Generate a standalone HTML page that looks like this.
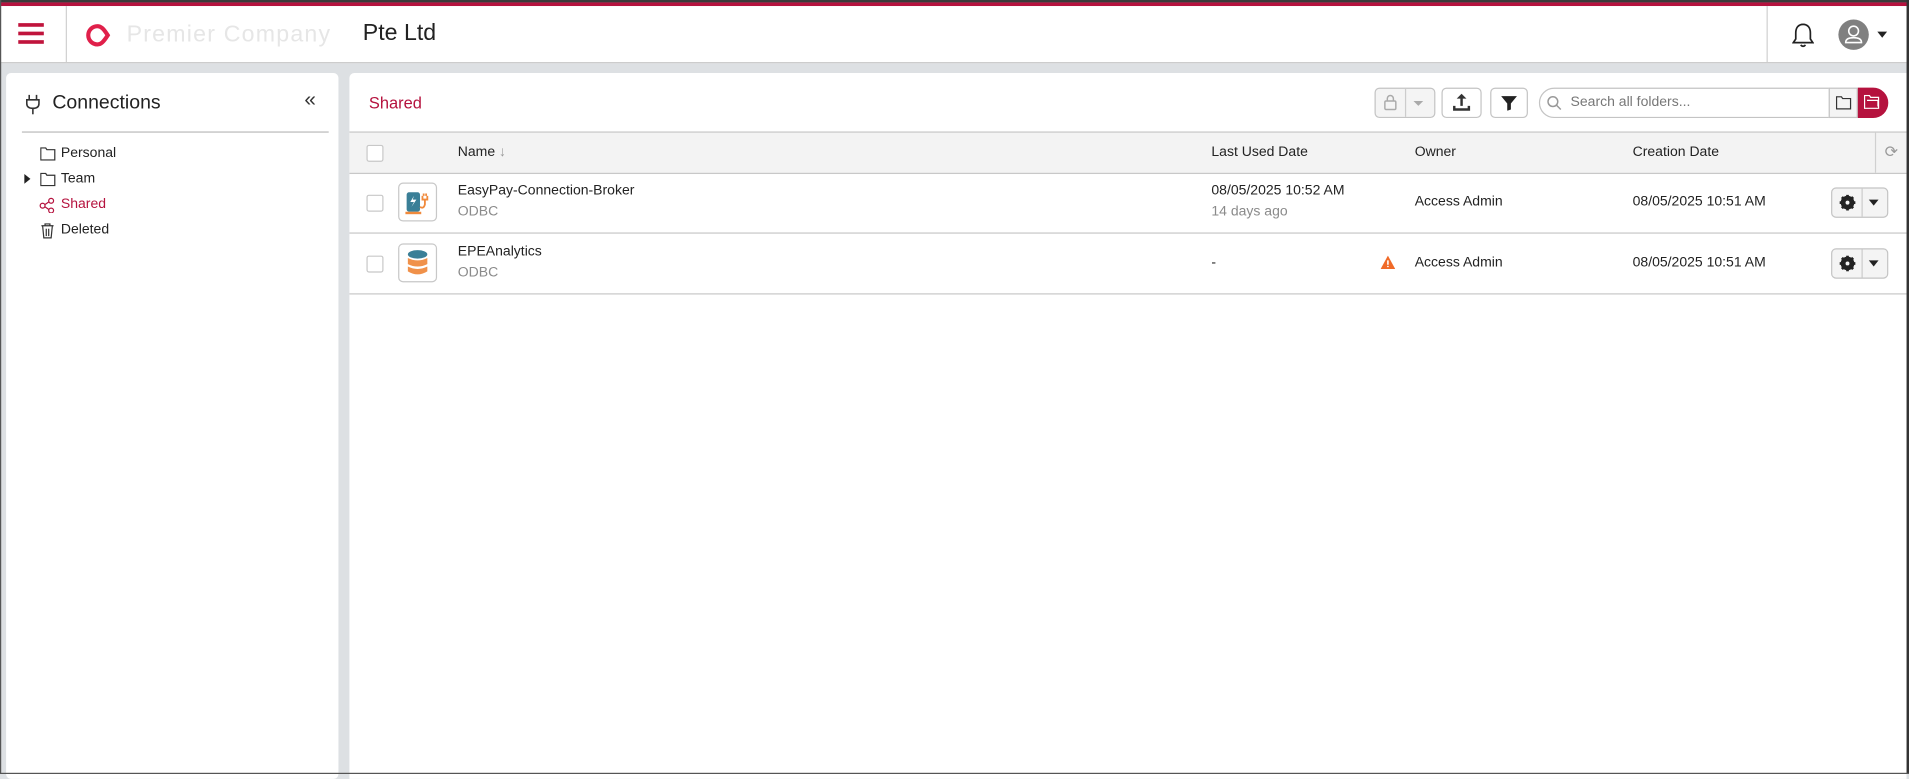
<!DOCTYPE html>
<html><head><meta charset="utf-8"><style>
html,body{margin:0;padding:0;width:1909px;height:774px;overflow:hidden;background:#dfe2e5;font-family:"Liberation Sans",sans-serif;}
#w{position:absolute;left:0;top:0;width:1568px;height:636px;transform:scale(1.21747,1.21698);transform-origin:0 0;background:#dde0e3;}
.a{position:absolute;}
.t{position:absolute;font-size:11.5px;color:#222;white-space:nowrap;}
.g{color:#8a8a8a;}
.cb{position:absolute;width:12px;height:12px;border:1px solid #c8c8c8;border-radius:2px;background:#fff;}
.btn{position:absolute;border:1px solid #c4c4c4;border-radius:4px;background:#fff;box-sizing:border-box;}
</style></head><body><div id="w">
<!-- header -->
<div class="a" style="left:0;top:0;width:1568px;height:2px;background:#3a3a3a"></div>
<div class="a" style="left:0;top:2px;width:1568px;height:3px;background:#b5123e"></div>
<div class="a" style="left:0;top:5px;width:1566px;height:46px;background:#fff;border-bottom:1px solid #c9c9c9"></div>
<div class="a" style="left:15px;top:19px;width:21px;height:3px;background:#c0143c"></div>
<div class="a" style="left:15px;top:26px;width:21px;height:3px;background:#c0143c"></div>
<div class="a" style="left:15px;top:33px;width:21px;height:3px;background:#c0143c"></div>
<div class="a" style="left:54px;top:5px;width:1px;height:46px;background:#d0d0d0"></div>
<svg class="a" style="left:70px;top:19px" width="24" height="20" viewBox="0 0 24 20"><path d="M10 2.5a7.5 7.5 0 1 0 0 15c3 0 5-2 8.5-7.5C15 4.5 13 2.5 10 2.5z" fill="none" stroke="#e0204a" stroke-width="3.4"/></svg>
<div class="t" style="left:104px;top:18px;font-size:19px;color:#e6e6e6;letter-spacing:1px">Premier Company</div>
<div class="t" style="left:298px;top:17px;font-size:19px;color:#222">Pte Ltd</div>
<div class="a" style="left:1451px;top:5px;width:1px;height:46px;background:#d0d0d0"></div>
<svg class="a" style="left:1472px;top:18px" width="18" height="22" viewBox="0 0 18 22"><path d="M9 2c-4 0-6 3-6 7v5l-2 3h16l-2-3V9c0-4-2-7-6-7zM7 19q2 2 4 0" fill="none" stroke="#222" stroke-width="1.4"/></svg>
<div class="a" style="left:1510px;top:16px;width:25px;height:25px;border-radius:50%;background:#808080"></div>
<svg class="a" style="left:1510px;top:16px" width="25" height="25" viewBox="0 0 25 25"><circle cx="12.5" cy="9.5" r="4" fill="none" stroke="#fff" stroke-width="1.3"/><path d="M6 19q0-4 6.5-4t6.5 4z" fill="none" stroke="#fff" stroke-width="1.3"/></svg>
<div class="a" style="left:1542px;top:26px;border:4px solid transparent;border-top:5px solid #222"></div>
<!-- left panel -->
<div class="a" style="left:5px;top:60px;width:273px;height:580px;background:#fff;border-radius:4px"></div>
<svg class="a" style="left:20px;top:77px" width="14" height="17" viewBox="0 0 14 17"><path d="M4 1v4M10 1v4M2 5h10v3q0 4-5 4t-5-4zM7 12v5" fill="none" stroke="#333" stroke-width="1.3"/></svg>
<div class="t" style="left:43px;top:76px;font-size:16px;color:#222">Connections</div>
<div class="t" style="left:250px;top:72px;font-size:17px;color:#333">«</div>
<div class="a" style="left:18px;top:108px;width:252px;height:1px;background:#bbb"></div>
<svg class="a" style="left:33px;top:121px" width="13" height="11"><path d="M.5 .5h4l1 1.5h6.5v8.5h-11.5z" fill="none" stroke="#333"/></svg>
<div class="t" style="left:50px;top:120px">Personal</div>
<div class="a" style="left:20px;top:143px;border:4px solid transparent;border-left:5px solid #222"></div>
<svg class="a" style="left:33px;top:142px" width="13" height="11"><path d="M.5 .5h4l1 1.5h6.5v8.5h-11.5z" fill="none" stroke="#333"/></svg>
<div class="t" style="left:50px;top:141px">Team</div>
<svg class="a" style="left:32px;top:162px" width="13" height="13" viewBox="0 0 13 13" fill="none" stroke="#b5123e"><circle cx="3" cy="7" r="2"/><circle cx="10" cy="3" r="2"/><circle cx="10" cy="11" r="2"/><path d="M5 6l3-2M5 8l3 2"/></svg>
<div class="t" style="left:50px;top:162px;color:#b5123e">Shared</div>
<svg class="a" style="left:33px;top:183px" width="12" height="13" viewBox="0 0 12 13" fill="none" stroke="#333"><path d="M1 2.5h10M4 2.5v-1.5h4v1.5M2 2.5l1 10h6l1-10M5 5v6M7 5v6"/></svg>
<div class="t" style="left:50px;top:183px">Deleted</div>
<!-- main panel -->
<div class="a" style="left:287px;top:60px;width:1279px;height:580px;background:#fff;border-radius:4px 0 0 0"></div>
<div class="t" style="left:303px;top:77px;font-size:13.5px;color:#b5123e">Shared</div>
<div class="btn" style="left:1129px;top:72px;width:50px;height:25px;background:#f4f4f4"></div>
<div class="a" style="left:1154px;top:73px;width:1px;height:23px;background:#ccc"></div>
<svg class="a" style="left:1136px;top:77px" width="12" height="14" viewBox="0 0 12 14" fill="none" stroke="#aaa" stroke-width="1.2"><rect x="1.5" y="6" width="9" height="7" rx="1"/><path d="M3.5 6V4a2.5 2.5 0 0 1 5 0v2"/></svg>
<div class="a" style="left:1161px;top:83px;border:4px solid transparent;border-top:4px solid #aaa"></div>
<div class="btn" style="left:1184px;top:72px;width:33px;height:25px"></div>
<svg class="a" style="left:1193px;top:76px" width="15" height="16" viewBox="0 0 15 16"><path d="M7.5 1l-4 4h3v6h2V5h3z" fill="#333"/><path d="M1.5 11v3h12v-3" fill="none" stroke="#333" stroke-width="2"/></svg>
<div class="btn" style="left:1224px;top:72px;width:31px;height:25px"></div>
<svg class="a" style="left:1233px;top:78px" width="13" height="13" viewBox="0 0 13 13"><path d="M0 1h13l-5 6v5l-3 1V7z" fill="#222"/></svg>
<div class="a" style="left:1264px;top:72px;width:262px;height:25px;border:1px solid #c4c4c4;border-radius:13px 0 0 13px;box-sizing:border-box"></div>
<svg class="a" style="left:1270px;top:78px" width="13" height="13" viewBox="0 0 13 13" fill="none" stroke="#999" stroke-width="1.2"><circle cx="5.5" cy="5.5" r="4"/><path d="M8.5 8.5l3.5 3.5"/></svg>
<div class="t" style="left:1290px;top:78px;color:#777">Search all folders...</div>
<div class="a" style="left:1502px;top:72px;width:24px;height:25px;background:#f4f4f4;border:1px solid #c4c4c4;box-sizing:border-box"></div>
<svg class="a" style="left:1508px;top:79px" width="13" height="11"><path d="M.5 .5h4l1 1.5h6.5v8.5h-11.5z" fill="none" stroke="#333"/></svg>
<div class="a" style="left:1526px;top:72px;width:25px;height:25px;background:#b5123e;border-radius:0 13px 13px 0"></div>
<svg class="a" style="left:1531px;top:78px" width="14" height="12" viewBox="0 0 14 12" fill="none" stroke="#fff"><path d="M.5 .5h4l1 1.5h6.5v9h-11.5z"/><path d="M2.5 4.5h9v5"/></svg>
<!-- table header -->
<div class="a" style="left:287px;top:108px;width:1279px;height:33px;background:#f3f3f3;border-top:1px solid #c8c8c8;border-bottom:1px solid #c8c8c8"></div>
<div class="cb" style="left:301px;top:119px"></div>
<div class="t" style="left:376px;top:119px">Name <span style="color:#999">↓</span></div>
<div class="t" style="left:995px;top:119px">Last Used Date</div>
<div class="t" style="left:1162px;top:119px">Owner</div>
<div class="t" style="left:1341px;top:119px">Creation Date</div>
<div class="a" style="left:1540px;top:109px;width:1px;height:33px;background:#d0d0d0"></div>
<div class="t" style="left:1548px;top:117px;color:#999;font-size:13px">⟳</div>
<!-- row 1 -->
<div class="a" style="left:287px;top:191px;width:1279px;height:1px;background:#c8c8c8"></div>
<div class="cb" style="left:301px;top:160px"></div>
<div class="a" style="left:327px;top:150px;width:32px;height:32px;border:1px solid #c8c8c8;border-radius:4px;box-sizing:border-box"></div>
<svg class="a" style="left:329px;top:152px" width="28" height="28" viewBox="0 0 28 28"><rect x="5" y="6" width="11" height="16" rx="2" fill="#3a7f97"/><path d="M11 9l-3 5h3l-2 4 4-6h-3z" fill="#fff"/><rect x="4" y="22" width="13" height="2" fill="#f08a3c"/><path d="M16 18q3 2 4-2v-4M18 9v3h4V9M19 9V7M21 9V7" fill="none" stroke="#f08a3c" stroke-width="1.5"/></svg>
<div class="t" style="left:376px;top:151px">EasyPay-Connection-Broker</div>
<div class="t g" style="left:376px;top:168px">ODBC</div>
<div class="t" style="left:995px;top:151px">08/05/2025 10:52 AM</div>
<div class="t g" style="left:995px;top:168px">14 days ago</div>
<div class="t" style="left:1162px;top:160px">Access Admin</div>
<div class="t" style="left:1341px;top:160px">08/05/2025 10:51 AM</div>
<!-- row 2 -->
<div class="a" style="left:287px;top:241px;width:1279px;height:1px;background:#c8c8c8"></div>
<div class="cb" style="left:301px;top:210px"></div>
<div class="a" style="left:327px;top:200px;width:32px;height:32px;border:1px solid #c8c8c8;border-radius:4px;box-sizing:border-box"></div>
<svg class="a" style="left:329px;top:202px" width="28" height="28" viewBox="0 0 28 28"><ellipse cx="14" cy="7" rx="8" ry="3.5" fill="#3a7f97"/><path d="M6 10q8 4 16 0v5q-8 4-16 0zM6 17q8 4 16 0v4q-8 5-16 0z" fill="#f0914a"/></svg>
<div class="t" style="left:376px;top:201px">EPEAnalytics</div>
<div class="t g" style="left:376px;top:218px">ODBC</div>
<div class="t" style="left:995px;top:210px">-</div>
<svg class="a" style="left:1134px;top:210px" width="12" height="11" viewBox="0 0 12 11"><path d="M6 0l6 11H0z" fill="#f06a28"/><path d="M6 4v3.5M6 8.5v1" stroke="#fff" stroke-width="1.3"/></svg>
<div class="t" style="left:1162px;top:210px">Access Admin</div>
<div class="t" style="left:1341px;top:210px">08/05/2025 10:51 AM</div>
<!-- action buttons -->
<div class="btn" style="left:1504px;top:154px;width:47px;height:25px;background:#f4f4f4"></div>
<div class="a" style="left:1529px;top:155px;width:1px;height:23px;background:#ccc"></div>
<svg class="a" style="left:1511px;top:160px" width="13" height="13" viewBox="0 0 13 13"><circle cx="6.5" cy="6.5" r="4.3" fill="none" stroke="#222" stroke-width="2.6"/><path d="M6.5 0v13M0 6.5h13M1.9 1.9l9.2 9.2M11.1 1.9l-9.2 9.2" stroke="#222" stroke-width="2.2"/><circle cx="6.5" cy="6.5" r="1.6" fill="#f4f4f4"/></svg>
<div class="a" style="left:1535px;top:164px;border:4px solid transparent;border-top:5px solid #222"></div>
<div class="btn" style="left:1504px;top:204px;width:47px;height:25px;background:#f4f4f4"></div>
<div class="a" style="left:1529px;top:205px;width:1px;height:23px;background:#ccc"></div>
<svg class="a" style="left:1511px;top:210px" width="13" height="13" viewBox="0 0 13 13"><circle cx="6.5" cy="6.5" r="4.3" fill="none" stroke="#222" stroke-width="2.6"/><path d="M6.5 0v13M0 6.5h13M1.9 1.9l9.2 9.2M11.1 1.9l-9.2 9.2" stroke="#222" stroke-width="2.2"/><circle cx="6.5" cy="6.5" r="1.6" fill="#f4f4f4"/></svg>
<div class="a" style="left:1535px;top:214px;border:4px solid transparent;border-top:5px solid #222"></div>
<!-- outer outline -->
<div class="a" style="left:1566px;top:0;width:2px;height:636px;background:#333"></div>
<div class="a" style="left:0;top:0;width:1px;height:636px;background:#555"></div>
<div class="a" style="left:0;top:635px;width:1568px;height:1px;background:#555"></div>
</div></body></html>
